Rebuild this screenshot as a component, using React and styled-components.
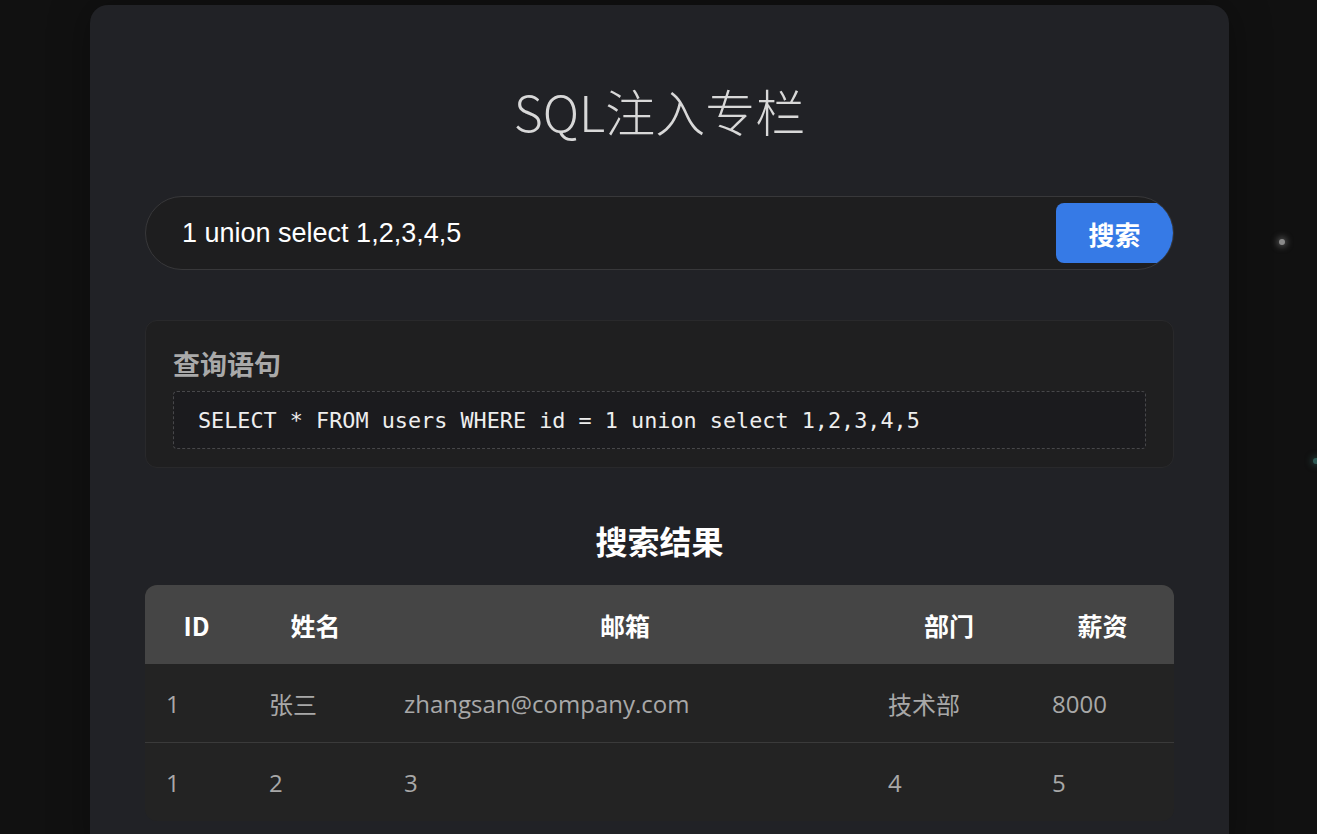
import React from 'react';
import styled, { createGlobalStyle } from 'styled-components';

const GlobalStyle = createGlobalStyle`
  html, body {
    margin: 0;
    padding: 0;
    background: #111111;
    height: 100%;
    overflow: hidden;
  }
  body {
    font-family: 'Noto Sans', 'Noto Sans CJK SC', sans-serif;
  }
`;

const columns = [
  { key: 'id', label: 'ID', width: 103 },
  { key: 'name', label: '姓名', width: 135 },
  { key: 'email', label: '邮箱', width: 484 },
  { key: 'dept', label: '部门', width: 164 },
  { key: 'salary', label: '薪资', width: 143 },
];

const rows = [
  { id: '1', name: '张三', email: 'zhangsan@company.com', dept: '技术部', salary: '8000' },
  { id: '1', name: '2', email: '3', dept: '4', salary: '5' },
];

const query = '1 union select 1,2,3,4,5';

const App = () => {
  return (
    <>
      <GlobalStyle />
      <Page>
        <Particle $x={1282} $y={242} $color="#8a8a8a" />
        <Particle $x={1316} $y={461} $color="#2f5a55" />
        <Card>
          <Title>SQL注入专栏</Title>

          <SearchBar>
            <SearchInput defaultValue={query} readOnly />
            <SearchButton>搜索</SearchButton>
          </SearchBar>

          <QueryPanel>
            <QueryLabel>查询语句</QueryLabel>
            <QueryCode>SELECT * FROM users WHERE id = {query}</QueryCode>
          </QueryPanel>

          <ResultTitle>搜索结果</ResultTitle>

          <TableWrap>
            <Table>
              <colgroup>
                {columns.map((c) => (
                  <col key={c.key} style={{ width: c.width }} />
                ))}
              </colgroup>
              <thead>
                <tr>
                  {columns.map((c) => (
                    <Th key={c.key}>{c.label}</Th>
                  ))}
                </tr>
              </thead>
              <tbody>
                {rows.map((r, i) => (
                  <Tr key={i} $first={i === 0}>
                    {columns.map((c) => (
                      <Td key={c.key}>{r[c.key]}</Td>
                    ))}
                  </Tr>
                ))}
              </tbody>
            </Table>
          </TableWrap>
        </Card>
      </Page>
    </>
  );
};

const Page = styled.div`
  position: relative;
  min-height: 834px;
  padding-top: 5px;
  box-sizing: border-box;
`;

const Particle = styled.span`
  position: absolute;
  left: ${(p) => p.$x - 3}px;
  top: ${(p) => p.$y - 3}px;
  width: 6px;
  height: 6px;
  border-radius: 50%;
  background: ${(p) => p.$color};
  box-shadow: 0 0 6px 2px ${(p) => p.$color}88;
`;

const Card = styled.div`
  width: 1139px;
  margin: 0 0 0 90px;
  box-sizing: border-box;
  min-height: 840px;
  padding: 76px 55px 40px;
  background: #212226;
  border-radius: 18px;
  box-shadow: 0 0 40px rgba(0, 0, 0, 0.35);
`;

const Title = styled.h1`
  margin: 0;
  text-align: center;
  font-family: 'Noto Sans CJK SC', 'Noto Sans', sans-serif;
  font-weight: 300;
  font-size: 50px;
  line-height: 58px;
  color: #d8d8d8;
`;

const SearchBar = styled.div`
  margin-top: 57px;
  height: 74px;
  box-sizing: border-box;
  display: flex;
  align-items: center;
  padding: 0 0 0 36px;
  background: #1e1e1f;
  border: 1px solid #38383a;
  border-radius: 37px;
  overflow: hidden;
`;

const SearchInput = styled.input`
  flex: 1;
  min-width: 0;
  background: transparent;
  border: none;
  outline: none;
  color: #ffffff;
  font-family: 'Liberation Sans', Arial, sans-serif;
  font-size: 27px;
  padding: 0;
`;

const SearchButton = styled.button`
  width: 117px;
  height: 60px;
  border: none;
  border-radius: 8px 0 0 8px;
  background: #367ae6;
  color: #ffffff;
  font-family: 'Noto Sans CJK SC', sans-serif;
  font-weight: 700;
  font-size: 26px;
  cursor: pointer;
`;

const QueryPanel = styled.div`
  margin-top: 50px;
  padding: 25px 27px 18px;
  background: #1f1f20;
  border: 1px solid #29292b;
  border-radius: 12px;
`;

const QueryLabel = styled.div`
  font-family: 'Noto Sans CJK SC', sans-serif;
  font-weight: 700;
  font-size: 27px;
  line-height: 36px;
  color: #a9a9a9;
`;

const QueryCode = styled.div`
  margin-top: 9px;
  height: 58px;
  box-sizing: border-box;
  display: flex;
  align-items: center;
  padding: 0 24px;
  background: #1b1b1e;
  border: 1px dashed #47474a;
  border-radius: 4px;
  color: #eeeeee;
  font-family: 'DejaVu Sans Mono', monospace;
  font-size: 21.8px;
  white-space: pre;
`;

const ResultTitle = styled.h2`
  margin: 53px 0 26px;
  text-align: center;
  font-family: 'Noto Sans CJK SC', sans-serif;
  font-weight: 700;
  font-size: 32px;
  line-height: 38px;
  color: #ffffff;
`;

const TableWrap = styled.div`
  border-radius: 12px;
  overflow: hidden;
  background: #232323;
`;

const Table = styled.table`
  width: 100%;
  border-collapse: collapse;
  table-layout: fixed;
  font-family: 'Open Sans', 'Noto Sans CJK SC', sans-serif;
  font-size: 24px;
`;

const Th = styled.th`
  height: 79px;
  padding: 0;
  background: #454545;
  color: #ffffff;
  font-family: 'Noto Sans CJK SC', sans-serif;
  font-weight: 700;
  font-size: 25px;
  text-align: center;
`;

const Tr = styled.tr`
  border-top: ${(p) => (p.$first ? 'none' : '1px solid #3a3a3a')};
`;

const Td = styled.td`
  height: 78px;
  padding: 0 0 0 21px;
  color: #a8a8a8;
  text-align: left;
`;

export default App;
